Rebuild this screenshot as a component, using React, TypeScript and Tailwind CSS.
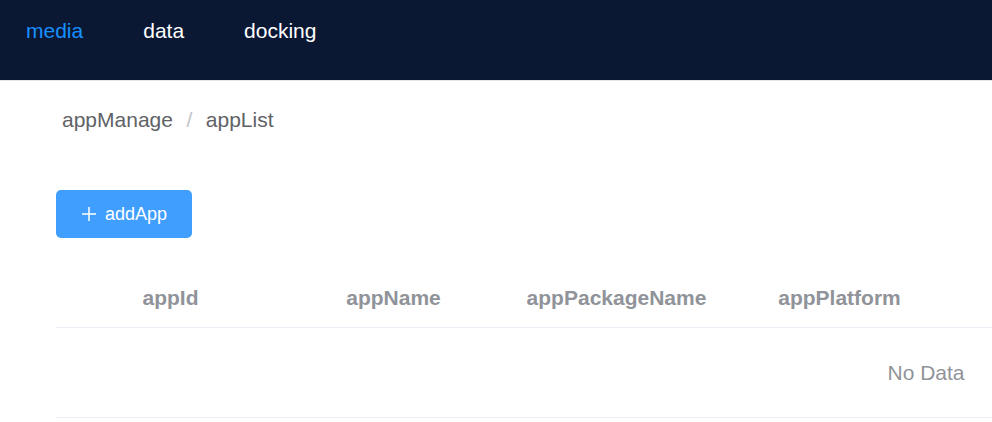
const navItems = ['media', 'data', 'docking'];
const columns = ['appId', 'appName', 'appPackageName', 'appPlatform'];

const PlusIcon = () => (
  <svg width="14" height="14" viewBox="0 0 14 14" fill="none" stroke="currentColor" strokeWidth="1.5">
    <path d="M7 0v14M0 7h14" />
  </svg>
);

const App = () => {
  return (
    <div className="w-[992px] h-[422px] overflow-hidden bg-white font-['Liberation_Sans',Arial,sans-serif]">
      {/* top menu */}
      <div className="h-[81px] bg-[#0a1833] border-b border-[#e6e6e6]">
        <div className="flex gap-[60px] pl-[26px] pt-[19px] text-[21px] leading-[24px]">
          {navItems.map((item, i) => (
            <span key={item} className={i === 0 ? 'text-[#1890ff]' : 'text-white'}>
              {item}
            </span>
          ))}
        </div>
      </div>

      <div className="pl-[56px]">
        {/* breadcrumb */}
        <div className="flex pl-[6px] mt-[27px] text-[21px] leading-[24px] text-[#606266]">
          <span>appManage</span>
          <span className="mx-[13.5px] text-[#c0c4cc]">/</span>
          <span>appList</span>
        </div>

        <button className="mt-[58px] flex items-center h-[48px] w-[136px] pl-[26px] gap-[9px] rounded-[5px] bg-[#409eff] text-white text-[18px] leading-none">
          <PlusIcon />
          <span>addApp</span>
        </button>

        {/* table */}
        <div className="w-[1740px] mt-[30px]">
          <div className="h-[60px] border-b border-[#ebeef5] pl-[3px] grid grid-cols-[repeat(4,223px)] items-center">
            {columns.map(col => (
              <div key={col} className="text-center font-bold text-[21px] text-[#909399]">
                {col}
              </div>
            ))}
          </div>
          <div className="h-[90px] border-b border-[#ebeef5] flex items-center justify-center text-[21px] text-[#909399]">
            No Data
          </div>
        </div>
      </div>
    </div>
  );
};

export default App;
